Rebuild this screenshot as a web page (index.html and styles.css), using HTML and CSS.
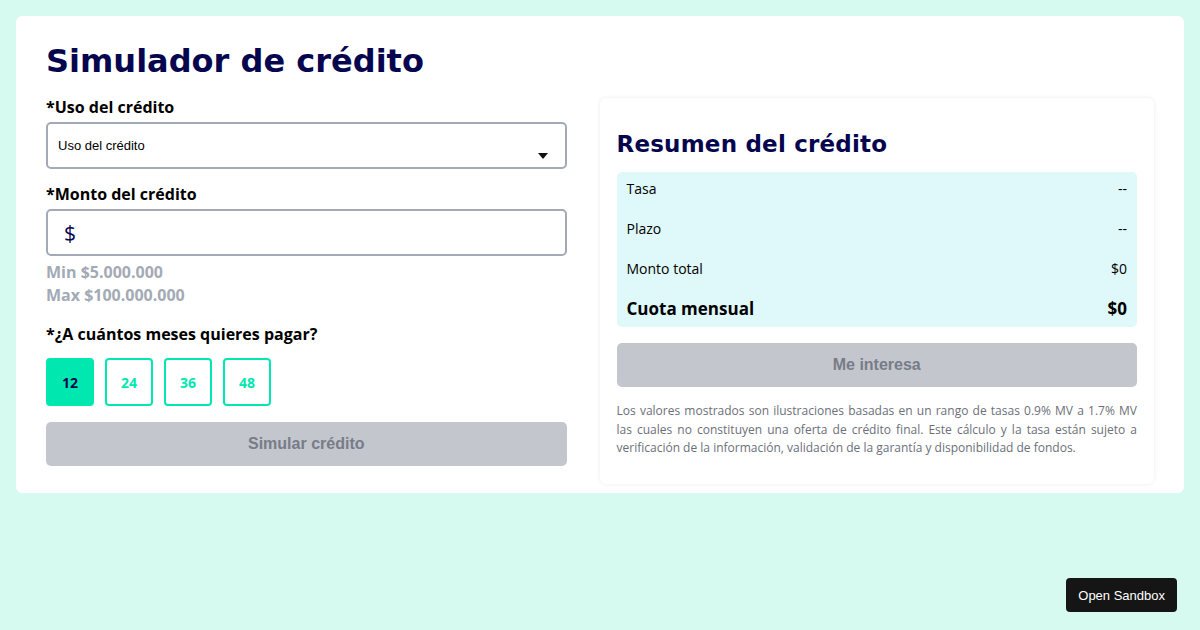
FILE: index.html
```html
<!DOCTYPE html>
<html>
<head>
  <title>Simulador de crédito</title>
  <link rel="stylesheet" href="styles.css">
</head>
<body>
  <div class="page">
    <div class="card">
      <h1 class="title">Simulador de crédito</h1>
      <div class="columns">
        <div class="form">
          <label class="label">*Uso del crédito</label>
          <div class="select">
            <span>Uso del crédito</span>
            <svg class="caret" width="10" height="6" viewBox="0 0 10 6"><path d="M0 0h10L5 6z" fill="#111"/></svg>
          </div>

          <label class="label">*Monto del crédito</label>
          <div class="money">
            <span class="currency">$</span>
          </div>
          <div class="limits">
            <div>Min $5.000.000</div>
            <div>Max $100.000.000</div>
          </div>

          <label class="label months-label">*¿A cuántos meses quieres pagar?</label>
          <div class="months">
            <button class="month active">12</button>
            <button class="month">24</button>
            <button class="month">36</button>
            <button class="month">48</button>
          </div>

          <button class="btn-disabled">Simular crédito</button>
        </div>

        <div class="summary">
          <h2 class="summary-title">Resumen del crédito</h2>
          <div class="summary-box">
            <div class="row"><span>Tasa</span><span>--</span></div>
            <div class="row"><span>Plazo</span><span>--</span></div>
            <div class="row"><span>Monto total</span><span>$0</span></div>
            <div class="row total"><span>Cuota mensual</span><span>$0</span></div>
          </div>
          <button class="btn-disabled">Me interesa</button>
          <p class="disclaimer">Los valores mostrados son ilustraciones basadas en un rango de tasas 0.9% MV a 1.7% MV las cuales no constituyen una oferta de crédito final. Este cálculo y la tasa están sujeto a verificación de la información, validación de la garantía y disponibilidad de fondos.</p>
        </div>
      </div>
    </div>
  </div>
  <button class="sandbox">Open Sandbox</button>
</body>
</html>
```

FILE: styles.css
```css
* {
  margin: 0;
  padding: 0;
  box-sizing: border-box;
}

body, html {
  height: 100%;
  overflow: hidden;
}

body {
  background: #d6faf0;
  font-family: 'Open Sans', sans-serif;
  color: #000;
}

.page {
  padding: 16px;
}

.card {
  background: #fff;
  border-radius: 6px;
  padding: 22px 30px 9px 30px;
}

.title {
  font-family: 'DejaVu Sans', sans-serif;
  font-weight: 700;
  font-size: 32px;
  letter-spacing: 0;
  color: #06064f;
  line-height: 46px;
  margin-bottom: 12px;
}

.columns {
  display: flex;
  gap: 33px;
  align-items: flex-start;
}

.form {
  width: 521px;
  display: flex;
  flex-direction: column;
}

.label {
  font-weight: 700;
  font-size: 16px;
  line-height: 22px;
  margin-bottom: 4px;
}

.select {
  height: 47px;
  border: 2px solid #a3aab6;
  border-radius: 5px;
  display: flex;
  justify-content: space-between;
  padding: 14px 17px 0 10px;
  font-family: 'Liberation Sans', sans-serif;
  font-size: 13px;
  margin-bottom: 14px;
}

.caret {
  margin-top: 15px;
}

.money {
  height: 47px;
  border: 2px solid #a3aab6;
  border-radius: 5px;
  padding: 0 16px;
  display: flex;
  align-items: center;
}

.currency {
  color: #06064f;
  font-size: 21px;
}

.limits {
  color: #a3aab6;
  font-weight: 700;
  font-size: 16px;
  line-height: 23px;
  margin-top: 5px;
}

.months-label {
  margin-top: 16px;
  margin-bottom: 13px;
}

.months {
  display: flex;
  gap: 11px;
  margin-bottom: 16px;
}

.month {
  width: 48px;
  height: 48px;
  border: 2px solid #00e8b0;
  border-radius: 4px;
  background: #fff;
  color: #00e8b0;
  font-family: 'Open Sans', sans-serif;
  font-weight: 700;
  font-size: 14px;
}

.month.active {
  background: #00e8b0;
  color: #06064f;
}

.btn-disabled {
  width: 100%;
  height: 44px;
  border: none;
  border-radius: 5px;
  background: #c3c6cd;
  color: #777c88;
  font-family: 'Liberation Sans', sans-serif;
  font-weight: 700;
  font-size: 16px;
}

.summary {
  width: 555px;
  margin-top: 2px;
  border-radius: 6px;
  box-shadow: 0 0 4px rgba(0, 0, 0, 0.08);
  padding: 30px 17px 26px 17px;
}

.summary-title {
  font-family: 'DejaVu Sans', sans-serif;
  font-weight: 700;
  font-size: 23px;
  letter-spacing: 0.2px;
  color: #06064f;
  line-height: 32px;
  margin-bottom: 12px;
}

.summary-box {
  background: #dff8f9;
  border-radius: 5px;
  padding: 6px 10px 7px 10px;
  margin-bottom: 16px;
  display: flex;
  flex-direction: column;
  gap: 20px;
}

.row {
  display: flex;
  justify-content: space-between;
  align-items: center;
  font-size: 14px;
  height: 20px;
}

.row.total {
  font-weight: 700;
  font-size: 17px;
  height: 24px;
  margin-top: -2px;
}

.disclaimer {
  margin-top: 15px;
  font-size: 12px;
  line-height: 18.5px;
  color: #6b6f78;
  text-align: justify;
}

.sandbox {
  position: fixed;
  right: 23px;
  bottom: 18px;
  background: #151515;
  color: #fff;
  border: none;
  border-radius: 4px;
  padding: 0 12px;
  height: 34px;
  font-family: 'Liberation Sans', sans-serif;
  font-size: 13px;
}
```
